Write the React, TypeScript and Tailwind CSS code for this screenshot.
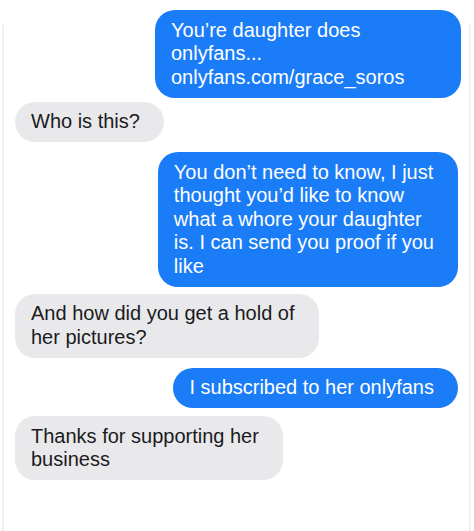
import React from 'react'

type Msg = { id: number; fromMe: boolean; lines: string[]; mt: string; extra?: string }

const messages: Msg[] = [
  {
    id: 1,
    fromMe: true,
    lines: ['You’re daughter does', 'onlyfans...', 'onlyfans.com/grace_soros'],
    mt: 'mt-[10px]',
    extra: 'w-[306px] -mr-[3px]',
  },
  { id: 2, fromMe: false, lines: ['Who is this?'], mt: 'mt-[4px]' },
  {
    id: 3,
    fromMe: true,
    lines: [
      'You don’t need to know, I just',
      'thought you’d like to know',
      'what a whore your daughter',
      'is. I can send you proof if you',
      'like',
    ],
    mt: 'mt-[10px]',
  },
  { id: 4, fromMe: false, lines: ['And how did you get a hold of', 'her pictures?'], mt: 'mt-[7px]' },
  { id: 5, fromMe: true, lines: ['I subscribed to her onlyfans'], mt: 'mt-[10px]' },
  { id: 6, fromMe: false, lines: ['Thanks for supporting her', 'business'], mt: 'mt-[8px]' },
]

export default function App() {
  return (
    <div
      className="relative w-[474px] h-[531px] bg-white overflow-hidden"
      style={{ fontFamily: '"Liberation Sans", Arial, sans-serif' }}
    >
      {/* faint edges of the cropped phone screenshot */}
      <div className="absolute left-[2px] top-[25px] bottom-0 w-[2px] bg-[#f0f0f2]" />
      <div className="absolute right-[3px] top-[25px] bottom-0 w-[2px] bg-[#f0f0f2]" />

      <div className="flex flex-col pl-[15px] pr-[16px]">
        {messages.map((m) => (
          <div key={m.id} className={`flex ${m.fromMe ? 'justify-end' : 'justify-start'} ${m.mt}`}>
            <div
              className={`whitespace-nowrap rounded-[20px] pl-[16px] pr-[24px] py-[8.5px] text-[20px] leading-[23.5px] ${
                m.fromMe ? 'bg-[#1a7cf7] text-white' : 'bg-[#e9e9ec] text-[#1b1b1d]'
              } ${m.extra ?? ''}`}
            >
              {m.lines.map((l, i) => (
                <div key={i}>{l}</div>
              ))}
            </div>
          </div>
        ))}
      </div>
    </div>
  )
}
